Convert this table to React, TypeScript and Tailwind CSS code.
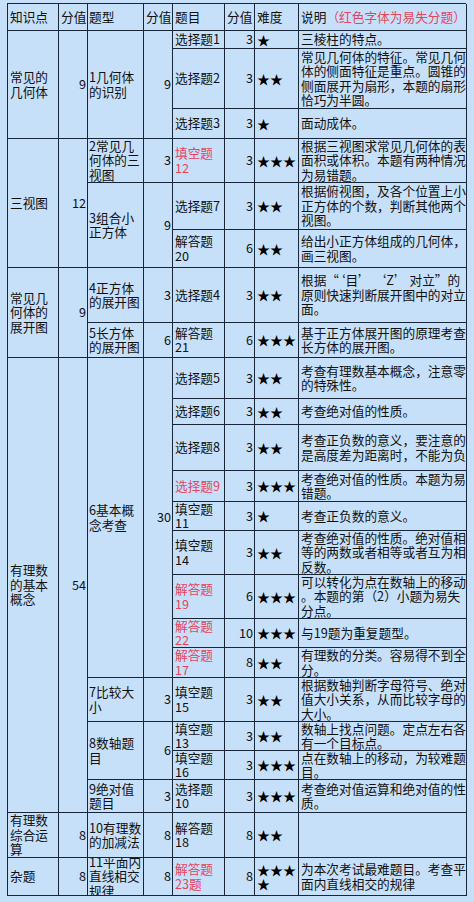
import type { ReactNode } from "react";

const RED = "text-[#e4465f]";

type Row = {
  q: string[];
  red?: boolean;
  score: string;
  stars: string[];
  desc: string[];
};

// right-hand four columns, one entry per grid row (header excluded)
const rows: Row[] = [
  { q: ["选择题1"], score: "3", stars: ["★"], desc: ["三棱柱的特点。"] },
  { q: ["选择题2"], score: "3", stars: ["★★"], desc: ["常见几何体的特征。常见几何", "体的侧面特征是重点。圆锥的", "侧面展开为扇形，本题的扇形", "恰巧为半圆。"] },
  { q: ["选择题3"], score: "3", stars: ["★"], desc: ["面动成体。"] },
  { q: ["填空题", "12"], red: true, score: "3", stars: ["★★★"], desc: ["根据三视图求常见几何体的表", "面积或体积。本题有两种情况", "为易错题。"] },
  { q: ["选择题7"], score: "3", stars: ["★★"], desc: ["根据俯视图，及各个位置上小", "正方体的个数，判断其他两个", "视图。"] },
  { q: ["解答题", "20"], score: "6", stars: ["★★"], desc: ["给出小正方体组成的几何体，", "画三视图。"] },
  { q: ["选择题4"], score: "3", stars: ["★★"], desc: ["根据“‘目’ ‘Z’ 对立”的", "原则快速判断展开图中的对立", "面。"] },
  { q: ["解答题", "21"], score: "6", stars: ["★★★"], desc: ["基于正方体展开图的原理考查", "长方体的展开图。"] },
  { q: ["选择题5"], score: "3", stars: ["★★"], desc: ["考查有理数基本概念，注意零", "的特殊性。"] },
  { q: ["选择题6"], score: "3", stars: ["★★"], desc: ["考查绝对值的性质。"] },
  { q: ["选择题8"], score: "3", stars: ["★★"], desc: ["考查正负数的意义，要注意的", "是高度差为距离时，不能为负"] },
  { q: ["选择题9"], red: true, score: "3", stars: ["★★★"], desc: ["考查绝对值的性质。本题为易", "错题。"] },
  { q: ["填空题", "11"], score: "3", stars: ["★"], desc: ["考查正负数的意义。"] },
  { q: ["填空题", "14"], score: "3", stars: ["★★"], desc: ["考查绝对值的性质。绝对值相", "等的两数或者相等或者互为相", "反数。"] },
  { q: ["解答题", "19"], red: true, score: "6", stars: ["★★★"], desc: ["可以转化为点在数轴上的移动", "。本题的第（2）小题为易失", "分点。"] },
  { q: ["解答题", "22"], red: true, score: "10", stars: ["★★★"], desc: ["与19题为重复题型。"] },
  { q: ["解答题", "17"], red: true, score: "8", stars: ["★★"], desc: ["有理数的分类。容易得不到全", "分。"] },
  { q: ["填空题", "15"], score: "3", stars: ["★★"], desc: ["根据数轴判断字母符号、绝对", "值大小关系，从而比较字母的", "大小。"] },
  { q: ["填空题", "13"], score: "3", stars: ["★★"], desc: ["数轴上找点问题。定点左右各", "有一个目标点。"] },
  { q: ["填空题", "16"], score: "3", stars: ["★★★"], desc: ["点在数轴上的移动，为较难题", "目。"] },
  { q: ["选择题", "10"], score: "3", stars: ["★★★"], desc: ["考查绝对值运算和绝对值的性", "质。"] },
  { q: ["解答题", "18"], score: "8", stars: ["★★"], desc: [] },
  { q: ["解答题", "23题"], red: true, score: "8", stars: ["★★★", "★"], desc: ["为本次考试最难题目。考查平", "面内直线相交的规律"] },
];

// left-hand columns: [grid row index (0 = first data row), span class, topic lines, score, type lines, type score]
type Group = { at: number; span: string; lines: string[]; score: string };

const topics: Group[] = [
  { at: 0, span: "row-span-3", lines: ["常见的", "几何体"], score: "9" },
  { at: 3, span: "row-span-3", lines: ["三视图"], score: "12" },
  { at: 6, span: "row-span-2", lines: ["常见几", "何体的", "展开图"], score: "9" },
  { at: 8, span: "row-span-13", lines: ["有理数", "的基本", "概念"], score: "54" },
  { at: 21, span: "row-span-1", lines: ["有理数", "综合运", "算"], score: "8" },
  { at: 22, span: "row-span-1", lines: ["杂题"], score: "8" },
];

const types: Group[] = [
  { at: 0, span: "row-span-3", lines: ["1几何体", "的识别"], score: "9" },
  { at: 3, span: "row-span-1", lines: ["2常见几", "何体的三", "视图"], score: "3" },
  { at: 4, span: "row-span-2", lines: ["3组合小", "正方体"], score: "9" },
  { at: 6, span: "row-span-1", lines: ["4正方体", "的展开图"], score: "3" },
  { at: 7, span: "row-span-1", lines: ["5长方体", "的展开图"], score: "6" },
  { at: 8, span: "row-span-9", lines: ["6基本概", "念考查"], score: "30" },
  { at: 17, span: "row-span-1", lines: ["7比较大", "小"], score: "3" },
  { at: 18, span: "row-span-2", lines: ["8数轴题", "目"], score: "6" },
  { at: 20, span: "row-span-1", lines: ["9绝对值", "题目"], score: "3" },
  { at: 21, span: "row-span-1", lines: ["10有理数", "的加减法"], score: "8" },
  { at: 22, span: "row-span-1", lines: ["11平面内", "直线相交", "规律"], score: "8" },
];

const base = "border-r border-b border-[#18263a] overflow-hidden flex items-center leading-[14.5px]";

function Cell({ span = "", className = "", children }: { span?: string; className?: string; children?: ReactNode }) {
  return <div className={`${base} ${span} ${className}`}>{children}</div>;
}

function Lines({ lines }: { lines: string[] }) {
  return (
    <div className="whitespace-nowrap">
      {lines.map((l, i) => (
        <div key={i}>{l}</div>
      ))}
    </div>
  );
}

function Num({ span, value }: { span?: string; value: string }) {
  return (
    <Cell span={span} className="justify-end pr-[1px]">
      {value}
    </Cell>
  );
}

export default function App() {
  const cells: ReactNode[] = [];
  rows.forEach((r, i) => {
    const t = topics.find((g) => g.at === i);
    if (t) {
      cells.push(
        <Cell key={`t${i}`} span={t.span} className="pl-[2px]"><Lines lines={t.lines} /></Cell>,
        <Num key={`ts${i}`} span={t.span} value={t.score} />
      );
    }
    const ty = types.find((g) => g.at === i);
    if (ty) {
      cells.push(
        <Cell key={`y${i}`} span={ty.span} className="pl-[1px]"><Lines lines={ty.lines} /></Cell>,
        <Num key={`ys${i}`} span={ty.span} value={ty.score} />
      );
    }
    cells.push(
      <Cell key={`q${i}`} className={`pl-[2px] ${r.red ? RED : ""}`}><Lines lines={r.q} /></Cell>,
      <Num key={`s${i}`} value={r.score} />,
      <Cell key={`r${i}`} className="pl-[2px] text-black text-[13px] leading-[14px]"><Lines lines={r.stars} /></Cell>,
      <Cell key={`d${i}`} className="pl-[2px]"><Lines lines={r.desc} /></Cell>
    );
  });

  return (
    <div
      className="w-[474px] h-[902px] bg-[#c7e0f9] pt-[3px] pl-[7px] text-[12.7px] text-[#111]"
      style={{ fontFamily: '"Noto Sans CJK SC", "Noto Sans", sans-serif' }}
    >
      <div className="grid w-[459px] border-l border-t border-[#18263a] grid-cols-[51px_29px_56px_29px_52px_30px_44px_168px] grid-rows-[27px_18px_60px_30px_44px_47px_38px_55px_35px_41px_26px_46px_31px_29px_44px_44px_29px_30px_44px_29px_29px_33px_45px_38px]">
        <Cell className="pl-[2px]">知识点</Cell>
        <Cell className="pl-[2px]">分值</Cell>
        <Cell className="pl-[1px]">题型</Cell>
        <Cell className="pl-[2px]">分值</Cell>
        <Cell className="pl-[2px]">题目</Cell>
        <Cell className="pl-[2px]">分值</Cell>
        <Cell className="pl-[2px]">难度</Cell>
        <Cell className="pl-[2px] whitespace-nowrap">
          说明<span className={RED}>（红色字体为易失分题）</span>
        </Cell>
        {cells}
      </div>
    </div>
  );
}
